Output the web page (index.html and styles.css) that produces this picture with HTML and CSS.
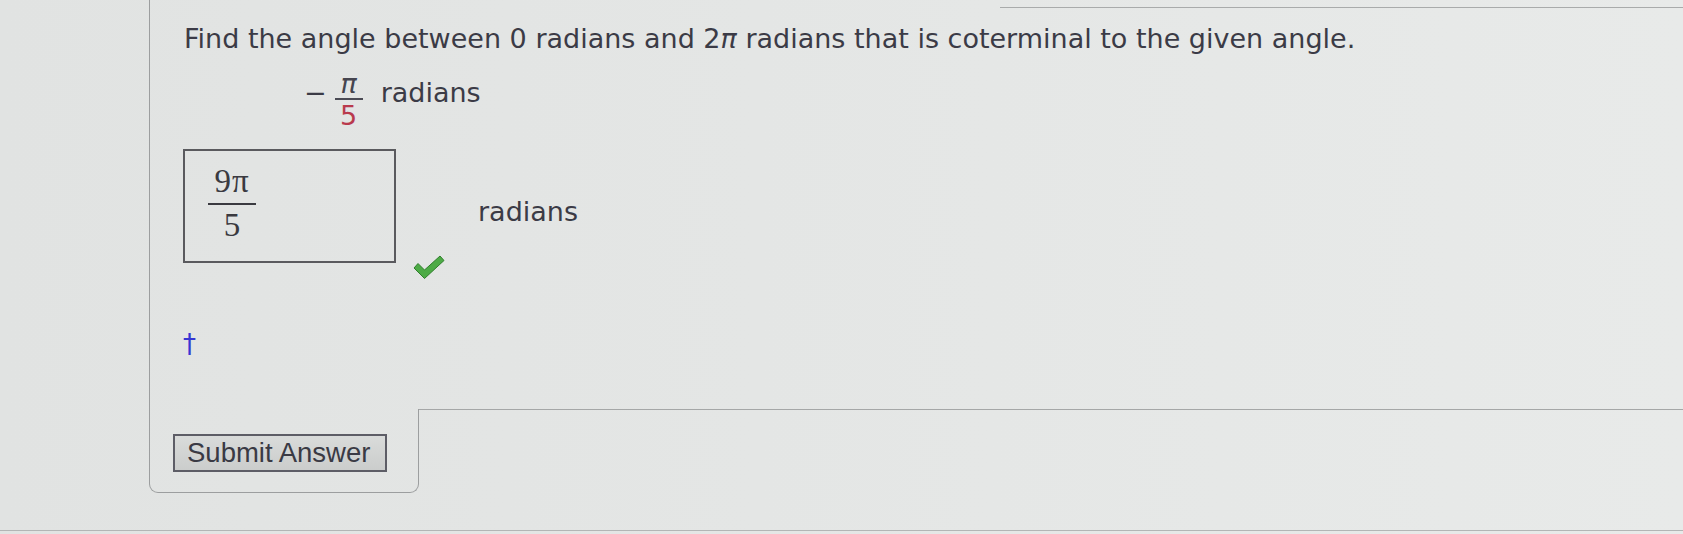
FILE: index.html
```html
<!DOCTYPE html>
<html lang="en">
<head>
<meta charset="utf-8">
<title>Coterminal angle</title>
<link rel="stylesheet" href="styles.css">
</head>
<body>
<div class="page">
  <div class="topline-row"><div class="topline"></div></div>
  <div class="card">
    <div class="card-body">
      <p class="question">Find the angle between 0 radians and 2<i class="pi">π</i> radians that is coterminal to the given angle.</p>
      <div class="given"><span class="minus">−</span><span class="frac"><span class="num">π</span><span class="den">5</span></span><span class="unit">radians</span></div>
      <div class="answer-row">
        <div class="answer-box">
          <div class="sfrac"><span class="snum">9π</span><span class="sden">5</span></div>
          <svg class="check" width="32" height="25" viewBox="0 0 32 25" aria-hidden="true">
            <polygon points="1,13 5,8.5 11.5,15 27,1 31,5.5 11.5,23.5" fill="#4dab46" stroke="#2f7f2c" stroke-width="1" stroke-linejoin="round"/>
          </svg>
        </div>
        <span class="unit2">radians</span>
      </div>
      <div class="dagger">†</div>
    </div>
    <div class="bottom-row">
      <div class="actions"><button class="submit" type="button">Submit Answer</button></div>
      <div class="rest"></div>
    </div>
  </div>
  <div class="footer-line"></div>
</div>
</body>
</html>
```

FILE: styles.css
```css
html, body {
  margin: 0;
  padding: 0;
}
body {
  width: 1683px;
  height: 534px;
  overflow: hidden;
  background: linear-gradient(90deg, #e1e3e2 0%, #e4e6e5 45%, #e8eae9 100%);
  font-family: "DejaVu Sans", Verdana, sans-serif;
  color: #3b3b46;
}
.page {
  position: relative;
}
.topline-row {
  display: flex;
  justify-content: flex-end;
  height: 0;
}
.topline {
  width: 683px;
  height: 0;
  margin-top: 7px;
  border-top: 1px solid #a9abab;
}
.card {
  margin-left: 149px;
}
.card-body {
  border-left: 1px solid #9c9e9f;
  padding-bottom: 51px;
}
.question {
  margin: 0;
  padding-top: 23px;
  padding-left: 34px;
  font-size: 27px;
  line-height: 32px;
  white-space: nowrap;
}
.question .pi {
  font-style: italic;
}
.given {
  margin-top: 15px;
  padding-left: 154px;
  font-size: 27px;
  line-height: 32px;
  white-space: nowrap;
}
.minus {
  display: inline-block;
}
.frac {
  display: inline-block;
  width: 28px;
  margin-left: 8px;
  vertical-align: -23px;
  text-align: center;
}
.num {
  display: block;
  line-height: 28px;
  font-style: oblique;
  color: #45454f;
}
.den {
  display: block;
  line-height: 32px;
  border-top: 2px solid #4a4a54;
  color: #b93a4d;
}
.unit {
  margin-left: 18px;
}
.answer-row {
  display: flex;
  align-items: flex-start;
  margin-top: 17px;
  padding-left: 33px;
}
.answer-box {
  position: relative;
  box-sizing: border-box;
  width: 213px;
  height: 114px;
  border: 2px solid #5a5a5e;
  padding: 15px 0 0 23px;
}
.sfrac {
  display: inline-flex;
  flex-direction: column;
  align-items: center;
  width: 48px;
  font-family: "Liberation Serif", "Times New Roman", serif;
  font-size: 33px;
  color: #3a3a40;
}
.snum {
  line-height: 30px;
  padding-bottom: 7px;
  letter-spacing: 1px;
}
.sden {
  align-self: stretch;
  text-align: center;
  line-height: 30px;
  padding-top: 5px;
  border-top: 2px solid #3a3a40;
}
.check {
  position: absolute;
  left: calc(100% + 19px);
  top: calc(100% - 6px);
}
.unit2 {
  margin-top: 47px;
  margin-left: 82px;
  font-size: 27px;
  line-height: 32px;
}
.dagger {
  margin-top: 67px;
  padding-left: 33px;
  font-size: 26px;
  line-height: 28px;
  color: #3636d2;
}
.bottom-row {
  display: flex;
  align-items: flex-start;
}
.actions {
  box-sizing: border-box;
  width: 270px;
  margin-left: 0;
  padding: 25px 0 20px 23px;
  border-left: 1px solid #9c9e9f;
  border-right: 1px solid #9c9e9f;
  border-bottom: 1px solid #9c9e9f;
  border-bottom-left-radius: 9px;
  border-bottom-right-radius: 9px;
}
.submit {
  display: block;
  box-sizing: border-box;
  width: 214px;
  height: 38px;
  margin: 0;
  padding: 0 0 0 12px;
  border: 2px solid #5d5d66;
  border-radius: 0;
  background: linear-gradient(#d9dbda, #cbcdcc);
  font-family: "Liberation Sans", Arial, sans-serif;
  font-size: 27.5px;
  line-height: 34px;
  color: #3a3a44;
  text-align: left;
  white-space: nowrap;
}
.rest {
  flex: 1;
  height: 84px;
  border-top: 1px solid #a5a7a7;
}
.footer-line {
  margin-top: 36px;
  border-top: 1px solid #b3b5b5;
}
```
